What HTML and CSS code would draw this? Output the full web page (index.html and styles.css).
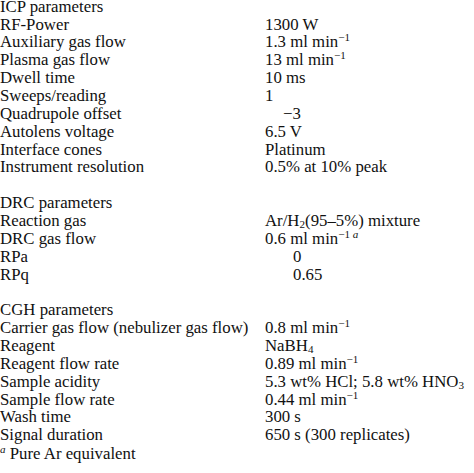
FILE: index.html
```html
<!DOCTYPE html>
<html>
<head>
<meta charset="utf-8">
<link rel="stylesheet" href="styles.css">
</head>
<body>
<div class="table">
  <div class="row"><span class="label">ICP parameters</span><span class="value"></span></div>
  <div class="row"><span class="label">RF-Power</span><span class="value">1300 W</span></div>
  <div class="row"><span class="label">Auxiliary gas flow</span><span class="value">1.3 ml min<sup>−1</sup></span></div>
  <div class="row"><span class="label">Plasma gas flow</span><span class="value">13 ml min<sup>−1</sup></span></div>
  <div class="row"><span class="label">Dwell time</span><span class="value">10 ms</span></div>
  <div class="row"><span class="label">Sweeps/reading</span><span class="value">1</span></div>
  <div class="row"><span class="label">Quadrupole offset</span><span class="value indent">−3</span></div>
  <div class="row"><span class="label">Autolens voltage</span><span class="value">6.5 V</span></div>
  <div class="row"><span class="label">Interface cones</span><span class="value">Platinum</span></div>
  <div class="row"><span class="label">Instrument resolution</span><span class="value">0.5% at 10% peak</span></div>
  <div class="row blank"></div>
  <div class="row"><span class="label">DRC parameters</span><span class="value"></span></div>
  <div class="row"><span class="label">Reaction gas</span><span class="value">Ar/H<sub>2</sub>(95–5%) mixture</span></div>
  <div class="row"><span class="label">DRC gas flow</span><span class="value">0.6 ml min<sup>−1 <i>a</i></sup></span></div>
  <div class="row"><span class="label">RPa</span><span class="value indent2">0</span></div>
  <div class="row"><span class="label">RPq</span><span class="value indent2">0.65</span></div>
  <div class="row blank"></div>
  <div class="row"><span class="label">CGH parameters</span><span class="value"></span></div>
  <div class="row"><span class="label">Carrier gas flow (nebulizer gas flow)</span><span class="value">0.8 ml min<sup>−1</sup></span></div>
  <div class="row"><span class="label">Reagent</span><span class="value">NaBH<sub>4</sub></span></div>
  <div class="row"><span class="label">Reagent flow rate</span><span class="value">0.89 ml min<sup>−1</sup></span></div>
  <div class="row"><span class="label">Sample acidity</span><span class="value">5.3 wt% HCl; 5.8 wt% HNO<sub>3</sub></span></div>
  <div class="row"><span class="label">Sample flow rate</span><span class="value">0.44 ml min<sup>−1</sup></span></div>
  <div class="row"><span class="label">Wash time</span><span class="value">300 s</span></div>
  <div class="row"><span class="label">Signal duration</span><span class="value">650 s (300 replicates)</span></div>
</div>
<p class="footnote"><sup><i>a</i></sup> Pure Ar equivalent</p>
</body>
</html>
```
FILE: styles.css
```css
html, body {
  margin: 0;
  padding: 0;
  background: #ffffff;
}
body {
  font-family: "Liberation Serif", "Times New Roman", serif;
  font-size: 16.8px;
  line-height: 17.86px;
  color: #111111;
  width: 474px;
  overflow: hidden;
}
.table {
  margin-top: -2.3px;
  padding-left: 0;
}
.row {
  display: grid;
  grid-template-columns: 265px 1fr;
  height: 17.86px;
  white-space: nowrap;
}
.value.indent {
  padding-left: 18px;
}
.value.indent2 {
  padding-left: 28px;
}
sup {
  font-size: 0.66em;
  line-height: 0;
  vertical-align: 0.55em;
}
sub {
  font-size: 0.66em;
  line-height: 0;
  vertical-align: -0.2em;
}
.footnote {
  margin: 1.2px 0 0 0;
}
```
